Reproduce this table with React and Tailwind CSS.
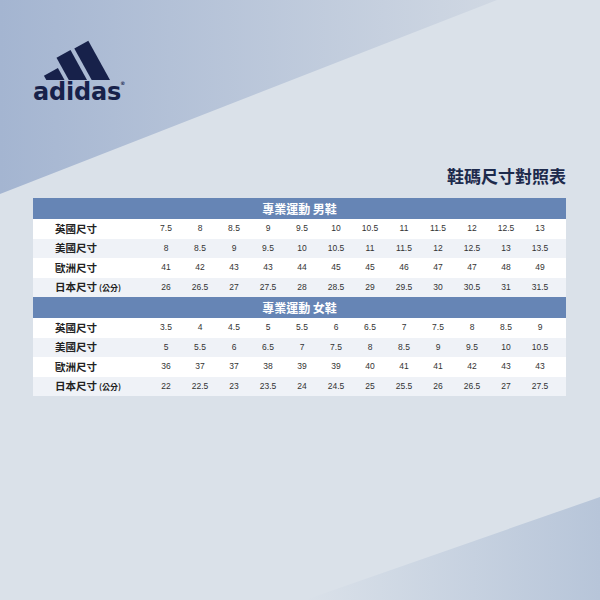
import React from 'react';

const men = {
    title: '專業運動 男鞋',
    rows: [
        ['英國尺寸', ['7.5', '8', '8.5', '9', '9.5', '10', '10.5', '11', '11.5', '12', '12.5', '13']],
        ['美國尺寸', ['8', '8.5', '9', '9.5', '10', '10.5', '11', '11.5', '12', '12.5', '13', '13.5']],
        ['歐洲尺寸', ['41', '42', '43', '43', '44', '45', '45', '46', '47', '47', '48', '49']],
        ['日本尺寸', ['26', '26.5', '27', '27.5', '28', '28.5', '29', '29.5', '30', '30.5', '31', '31.5']],
    ],
};

const women = {
    title: '專業運動 女鞋',
    rows: [
        ['英國尺寸', ['3.5', '4', '4.5', '5', '5.5', '6', '6.5', '7', '7.5', '8', '8.5', '9']],
        ['美國尺寸', ['5', '5.5', '6', '6.5', '7', '7.5', '8', '8.5', '9', '9.5', '10', '10.5']],
        ['歐洲尺寸', ['36', '37', '37', '38', '39', '39', '40', '41', '41', '42', '43', '43']],
        ['日本尺寸', ['22', '22.5', '23', '23.5', '24', '24.5', '25', '25.5', '26', '26.5', '27', '27.5']],
    ],
};

const cjk = "font-['Noto_Sans_CJK_TC','Noto_Sans_CJK_SC',sans-serif]";

function SizeBlock({ data }) {
    return (
        <div>
            <div className={`h-[21px] bg-[#6685b5] flex items-center justify-center text-white text-[12px] font-bold ${cjk}`}>
                {data.title}
            </div>
            {data.rows.map(([label, vals], i) => (
                <div key={label} className={`h-[19.5px] flex items-center ${i % 2 === 0 ? 'bg-white' : 'bg-[#eff2f7]'}`}>
                    <div className={`w-[116px] pl-[22px] text-[10.5px] font-bold text-[#222] leading-none ${cjk}`}>
                        {label}
                        {label === '日本尺寸' && <span className="text-[8px] ml-[2px]">(公分)</span>}
                    </div>
                    {vals.map((v, j) => (
                        <div key={j} className="w-[34px] text-center text-[8.5px] text-[#333] font-['Liberation_Sans',Arial,sans-serif]">{v}</div>
                    ))}
                </div>
            ))}
        </div>
    );
}

export default function App() {
    return (
        <div className="w-[600px] h-[600px] relative overflow-hidden bg-[#dae1e9]">
            {/* background wedges */}
            <svg className="absolute inset-0" width="600" height="600" viewBox="0 0 600 600">
                <defs>
                    <linearGradient id="tl" x1="0" y1="0" x2="497" y2="0" gradientUnits="userSpaceOnUse">
                        <stop offset="0" stopColor="#a4b5d1" />
                        <stop offset="1" stopColor="#d0d8e3" />
                    </linearGradient>
                    <linearGradient id="br" x1="305" y1="0" x2="600" y2="0" gradientUnits="userSpaceOnUse">
                        <stop offset="0" stopColor="#dae1e9" />
                        <stop offset="1" stopColor="#b7c5d9" />
                    </linearGradient>
                </defs>
                <polygon points="0,0 497,0 0,194" fill="url(#tl)" />
                <polygon points="600,497 600,600 305,600" fill="url(#br)" />
            </svg>

            <div className="relative pt-[38px] pl-[33px] pr-[34px]">
                {/* logo */}
                <div className="h-[128px]">
                    <svg className="ml-[7px] block" width="72" height="43" viewBox="40 38 72 43">
                        <g fill="#17214a">
                            <polygon points="74.3,48.4 88.3,40.7 110,80 91.7,80" />
                            <polygon points="56.5,57.7 70.5,50 87,80 68.8,80" />
                            <polygon points="43.9,75.7 57.9,68 64.5,80 46.3,80" />
                        </g>
                    </svg>
                    <div className="relative inline-block -mt-[1px] text-[24px] leading-[24px] font-bold text-[#17214a] font-['DejaVu_Sans',sans-serif] tracking-[-0.2px]">
                        adidas
                        <span className="absolute -right-[4px] top-[1px] text-[5px] leading-none">®</span>
                    </div>
                </div>

                <div className={`h-[20px] mb-[12px] flex justify-end items-center text-[17px] font-bold text-[#1d2a4c] ${cjk}`}>
                    鞋碼尺寸對照表
                </div>

                <div className="w-[533px]">
                    <SizeBlock data={men} />
                    <SizeBlock data={women} />
                </div>
            </div>
        </div>
    );
}
